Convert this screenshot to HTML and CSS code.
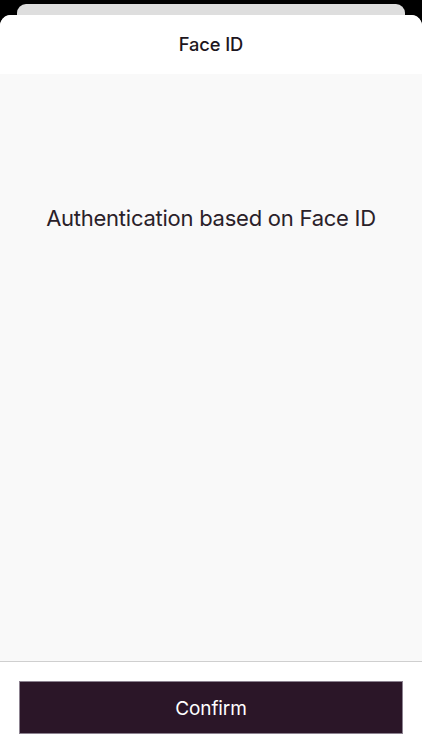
FILE: index.html
```html
<!DOCTYPE html>
<html lang="en">
<head>
<meta charset="utf-8">
<title>Face ID</title>
<link rel="stylesheet" href="styles.css">
</head>
<body>
<div class="screen">
  <div class="back-card"></div>
  <div class="sheet">
    <header class="sheet-header">
      <h1 class="title">Face ID</h1>
    </header>
    <main class="sheet-body">
      <p class="message">Authentication based on Face ID</p>
    </main>
    <footer class="sheet-footer">
      <button class="confirm-btn" type="button">Confirm</button>
    </footer>
  </div>
</div>
</body>
</html>
```

FILE: styles.css
```css
html, body {
  margin: 0;
  padding: 0;
  height: 100%;
  background: #000;
}

body {
  font-family: "Inter", "Roboto", "Liberation Sans", sans-serif;
  -webkit-font-smoothing: antialiased;
}

.screen {
  width: 422px;
  height: 750px;
  display: flex;
  flex-direction: column;
  position: relative;
  overflow: hidden;
  background: #000;
}

.back-card {
  position: absolute;
  top: 4px;
  left: 17px;
  right: 17px;
  height: 40px;
  background: #dedede;
  border-radius: 9px;
}

.sheet {
  position: relative;
  margin-top: 15px;
  flex: 1;
  display: flex;
  flex-direction: column;
  background: #fff;
  border-radius: 11px 11px 0 0;
  overflow: hidden;
}

.sheet-header {
  height: 59px;
  display: flex;
  align-items: center;
  justify-content: center;
  background: #fff;
}

.title {
  margin: 0;
  font-size: 18.3px;
  font-weight: 500;
  color: #1d1620;
  letter-spacing: -0.1px;
  padding-bottom: 1px;
}

.sheet-body {
  flex: 1;
  background: #f9f9f9;
  display: flex;
  flex-direction: column;
  align-items: center;
  padding-top: 131px;
  border-bottom: 1px solid #cfcfcf;
}

.message {
  margin: 0;
  font-size: 22px;
  font-weight: 400;
  color: #2a2129;
  letter-spacing: -0.25px;
}

.sheet-footer {
  height: 88px;
  background: #fff;
  padding: 19px 19px 0;
  box-sizing: border-box;
}

.confirm-btn {
  display: block;
  width: 100%;
  height: 53px;
  background: #2b1628;
  border: 1px solid #8c8290;
  color: #fff;
  font-family: inherit;
  font-size: 19px;
  font-weight: 400;
  letter-spacing: -0.1px;
  padding-top: 2px;
  cursor: pointer;
}
```
